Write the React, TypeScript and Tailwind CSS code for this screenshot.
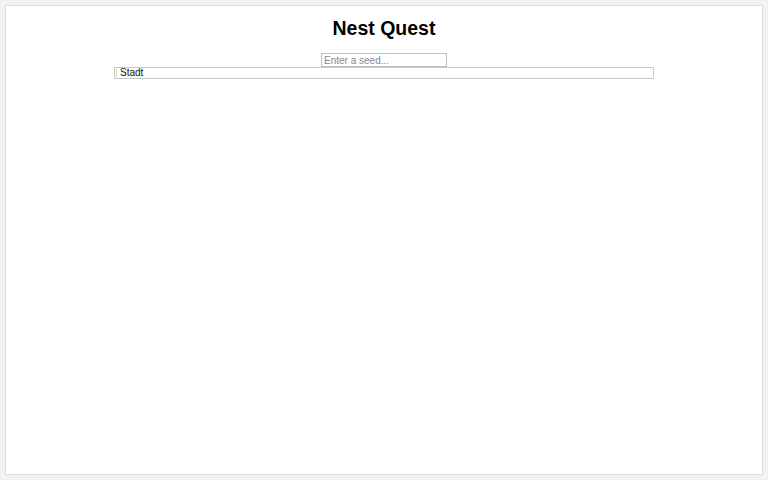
import React from 'react';

export default function App() {
    return (
        <div className="h-[480px] w-[768px] bg-[#f2f2f2] p-[5px] font-['Liberation_Sans',Arial,sans-serif]">
            <div className="flex h-[470px] w-[758px] flex-col items-center border border-[#dddddd] bg-white">
                <h1 className="mt-[8px] text-[19.5px] leading-[28px] font-bold text-black">Nest Quest</h1>

                <input
                    type="text"
                    placeholder="Enter a seed..."
                    className="mt-[11px] h-[14px] w-[126px] border border-[#bdbdbd] px-[2px] text-[10px] leading-[12px] text-black placeholder:text-[#888888] outline-none"
                />

                <div className="flex h-[12px] w-[540px] items-center border border-[#c8c8c8] pl-[1px]">
                    <div className="h-[8px] w-[2px] border-l border-[#d0d0d0]" />
                    <span className="ml-[2px] text-[10px] leading-[10px] text-[#111111]">Stadt</span>
                </div>
            </div>
        </div>
    );
}
